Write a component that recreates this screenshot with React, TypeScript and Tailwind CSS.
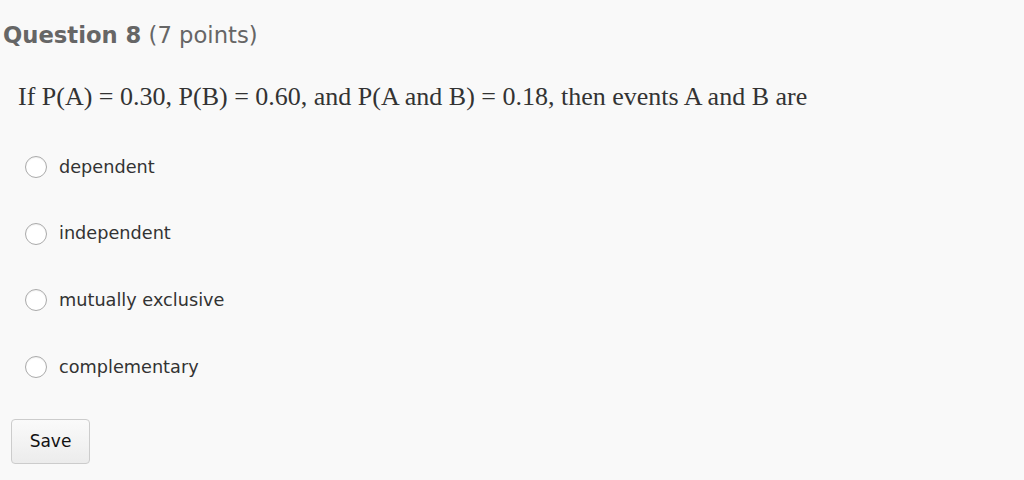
import React from 'react';

const options = ['dependent', 'independent', 'mutually exclusive', 'complementary'];

const App: React.FC = () => {
  return (
    <div className="w-[1024px] h-[480px] bg-[#f9f9f9] overflow-hidden font-['DejaVu_Sans',Verdana,sans-serif]">
      <div className="pl-[3px] pt-[21px]">
        <h2 className="text-[22.7px] leading-[28px] text-[#666666]">
          <span className="font-bold">Question 8</span> <span>(7 points)</span>
        </h2>
      </div>
      <p className="pl-[18px] pt-[33px] text-[26px] leading-[30px] text-[#333333] font-['Liberation_Serif','Times_New_Roman',serif]">
        If P(A) = 0.30, P(B) = 0.60, and P(A and B) = 0.18, then events A and B are
      </p>
      <div className="flex flex-col pl-[25px] pt-[44px] gap-[44.7px]">
        {options.map((opt) => (
          <label key={opt} className="flex items-center h-[22px] gap-[12px]">
            <span className="w-[22px] h-[22px] rounded-full border border-[#aaaaaa] bg-white shadow-[inset_0_1px_1px_rgba(0,0,0,0.06)]" />
            <span className="text-[17.7px] text-[#333333]">{opt}</span>
          </label>
        ))}
      </div>
      <div className="pl-[11px] pt-[41px]">
        <button className="w-[79px] h-[45px] rounded-[4px] border border-[#cccccc] bg-gradient-to-b from-[#fafafa] to-[#ececec] text-[17px] text-[#111111]">
          Save
        </button>
      </div>
    </div>
  );
};

export default App;
